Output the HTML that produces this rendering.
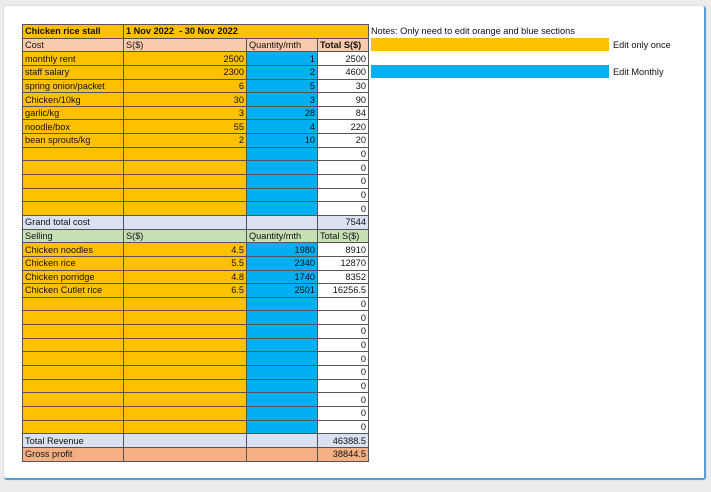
<!DOCTYPE html>
<html><head><style>
body{margin:0;width:711px;height:492px;background:#ececec;position:relative;overflow:hidden;font-family:"Liberation Sans",sans-serif;}
.card{position:absolute;left:4px;top:6px;width:700px;height:472px;background:#fff;border-radius:3px;border-right:2px solid #5b9bd5;border-bottom:2px solid #5b9bd5;box-shadow:0 0 2px #ccc;}
table{position:absolute;left:22px;top:24px;border-collapse:collapse;table-layout:fixed;font-size:9.2px;}
td{height:12.65px;padding:0 2px;border:1px solid #555;white-space:nowrap;overflow:hidden;line-height:12px;color:#111;}
.o{background:#ffc000}.b{background:#00b0f0}.w{background:#fff}
.r{text-align:right}
.p{background:#f8cbad}.g{background:#c6e0b4}.l{background:#d9e1f2}.gp{background:#f4b084}
.bold{font-weight:bold}
.n{position:absolute;font-size:9.2px;color:#111}
.bar{position:absolute;left:371px;width:238px;height:13px}
</style></head><body>
<div class="card"></div>
<table>
<colgroup><col style="width:101px"><col style="width:123px"><col style="width:71px"><col style="width:51px"></colgroup>
<tr class="o bold"><td>Chicken rice stall</td><td colspan="3">1 Nov 2022&nbsp; - 30 Nov 2022</td></tr>
<tr class="p"><td>Cost</td><td>S($)</td><td>Quantity/mth</td><td class="bold">Total S($)</td></tr>
<tr><td class="o">monthly rent</td><td class="o r">2500</td><td class="b r">1</td><td class="w r">2500</td></tr>
<tr><td class="o">staff salary</td><td class="o r">2300</td><td class="b r">2</td><td class="w r">4600</td></tr>
<tr><td class="o">spring onion/packet</td><td class="o r">6</td><td class="b r">5</td><td class="w r">30</td></tr>
<tr><td class="o">Chicken/10kg</td><td class="o r">30</td><td class="b r">3</td><td class="w r">90</td></tr>
<tr><td class="o">garlic/kg</td><td class="o r">3</td><td class="b r">28</td><td class="w r">84</td></tr>
<tr><td class="o">noodle/box</td><td class="o r">55</td><td class="b r">4</td><td class="w r">220</td></tr>
<tr><td class="o">bean sprouts/kg</td><td class="o r">2</td><td class="b r">10</td><td class="w r">20</td></tr>
<tr><td class="o"></td><td class="o"></td><td class="b"></td><td class="w r">0</td></tr>
<tr><td class="o"></td><td class="o"></td><td class="b"></td><td class="w r">0</td></tr>
<tr><td class="o"></td><td class="o"></td><td class="b"></td><td class="w r">0</td></tr>
<tr><td class="o"></td><td class="o"></td><td class="b"></td><td class="w r">0</td></tr>
<tr><td class="o"></td><td class="o"></td><td class="b"></td><td class="w r">0</td></tr>
<tr class="l"><td>Grand total cost</td><td></td><td></td><td class="r">7544</td></tr>
<tr class="g"><td>Selling</td><td>S($)</td><td>Quantity/mth</td><td>Total S($)</td></tr>
<tr><td class="o">Chicken noodles</td><td class="o r">4.5</td><td class="b r">1980</td><td class="w r">8910</td></tr>
<tr><td class="o">Chicken rice</td><td class="o r">5.5</td><td class="b r">2340</td><td class="w r">12870</td></tr>
<tr><td class="o">Chicken porridge</td><td class="o r">4.8</td><td class="b r">1740</td><td class="w r">8352</td></tr>
<tr><td class="o">Chicken Cutlet rice</td><td class="o r">6.5</td><td class="b r">2501</td><td class="w r">16256.5</td></tr>
<tr><td class="o"></td><td class="o"></td><td class="b"></td><td class="w r">0</td></tr>
<tr><td class="o"></td><td class="o"></td><td class="b"></td><td class="w r">0</td></tr>
<tr><td class="o"></td><td class="o"></td><td class="b"></td><td class="w r">0</td></tr>
<tr><td class="o"></td><td class="o"></td><td class="b"></td><td class="w r">0</td></tr>
<tr><td class="o"></td><td class="o"></td><td class="b"></td><td class="w r">0</td></tr>
<tr><td class="o"></td><td class="o"></td><td class="b"></td><td class="w r">0</td></tr>
<tr><td class="o"></td><td class="o"></td><td class="b"></td><td class="w r">0</td></tr>
<tr><td class="o"></td><td class="o"></td><td class="b"></td><td class="w r">0</td></tr>
<tr><td class="o"></td><td class="o"></td><td class="b"></td><td class="w r">0</td></tr>
<tr><td class="o"></td><td class="o"></td><td class="b"></td><td class="w r">0</td></tr>
<tr class="l"><td>Total Revenue</td><td></td><td></td><td class="r">46388.5</td></tr>
<tr class="gp"><td>Gross profit</td><td></td><td></td><td class="r">38844.5</td></tr>
</table>
<div class="n" style="left:371px;top:26px">Notes: Only need to edit orange and blue sections</div>
<div class="bar" style="top:38px;background:#ffc000"></div>
<div class="n" style="left:613px;top:40px">Edit only once</div>
<div class="bar" style="top:65px;background:#00b0f0"></div>
<div class="n" style="left:613px;top:67px">Edit Monthly</div>
</body></html>
